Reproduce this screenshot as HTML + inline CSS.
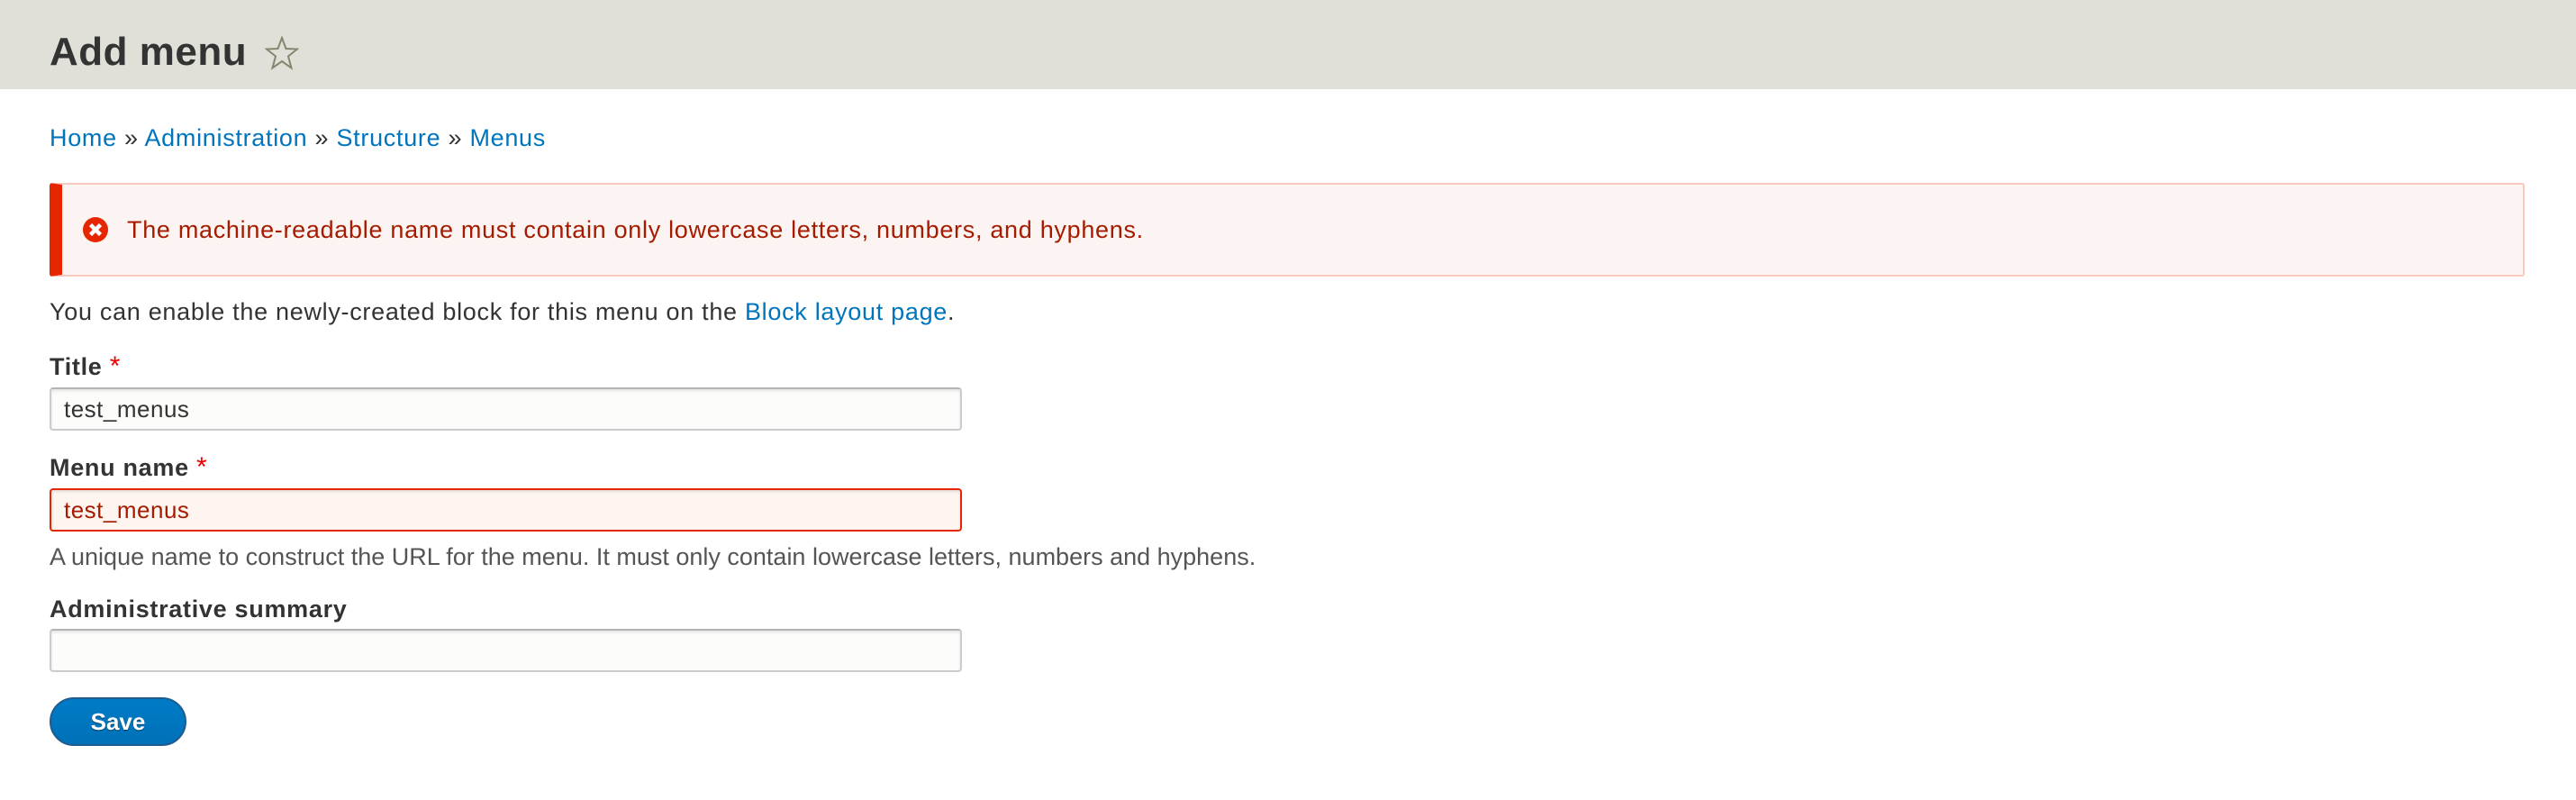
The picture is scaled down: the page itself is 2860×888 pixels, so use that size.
<!DOCTYPE html>
<html><head><meta charset="utf-8"><style>
*{box-sizing:border-box;margin:0;padding:0}
body{width:2860px;height:888px;background:#fff;font-family:"Liberation Sans",sans-serif;color:#333;position:relative;overflow:hidden}
.hdr{position:absolute;left:0;top:0;width:2860px;height:99px;background:#e0e0d8}
h1{position:absolute;left:55px;top:32px;font-size:44px;font-weight:bold;color:#333;line-height:52px;letter-spacing:0.5px}
.star{position:absolute;left:294px;top:40px}
.abs{position:absolute;white-space:nowrap;font-size:27px;line-height:30px;letter-spacing:0.7px}
a{color:#0074bd;text-decoration:none}
.err{position:absolute;left:55px;top:203px;width:2748px;height:104px;background:#fcf4f2;border:2px solid #f9c9bf;border-left:14px solid #e62600;border-radius:3px}
.inp{position:absolute;left:55px;width:1013px;height:48px;background:#fcfcfa;border:2px solid #ccc;border-top-color:#b4b4b4;border-radius:4px;box-shadow:inset 0 2px 3px rgba(0,0,0,.1);font-size:26px;padding-left:14px;line-height:44px;color:#333;letter-spacing:0.5px}
.inp.bad{border-color:#e62600;background:#fef5f1;color:#a51b00}
label{font-weight:bold}
.req{color:#e00;font-size:30px;vertical-align:top}
.btn{position:absolute;left:55px;top:774px;width:152px;height:54px;border-radius:27px;background:linear-gradient(#007bc6,#0071b8);border:2px solid #1e5c90;color:#fff;font-weight:bold;font-size:26px;text-align:center;line-height:50px;text-shadow:0 1px 1px rgba(0,0,0,.5)}
</style></head><body>
<div class="hdr"></div>
<h1>Add menu</h1>
<svg class="star" width="38" height="38" viewBox="0 0 38 38"><path d="M19 2 L23.5 14 L36 14.5 L26 22.5 L29.5 35.5 L19 28 L8.5 35.5 L12 22.5 L2 14.5 L14.5 14 Z" fill="none" stroke="#868670" stroke-width="2"/></svg>
<div class="abs" style="left:55px;top:138px"><a>Home</a> » <a>Administration</a> » <a>Structure</a> » <a>Menus</a></div>
<div class="err"></div>
<svg style="position:absolute;left:91px;top:240px" width="30" height="30" viewBox="0 0 30 30"><circle cx="15" cy="15" r="14" fill="#e62600"/><path d="M9.5 9.5 L20.5 20.5 M20.5 9.5 L9.5 20.5" stroke="#fff" stroke-width="4.5"/></svg>
<div class="abs" style="left:141px;top:240px;color:#a51b00">The machine-readable name must contain only lowercase letters, numbers, and hyphens.</div>
<div class="abs" style="left:55px;top:331px">You can enable the newly-created block for this menu on the <a>Block layout page</a>.</div>
<div class="abs" style="left:55px;top:392px"><label>Title</label> <span class="req">*</span></div>
<div class="inp" style="top:430px">test_menus</div>
<div class="abs" style="left:55px;top:504px"><label>Menu name</label> <span class="req">*</span></div>
<div class="inp bad" style="top:542px">test_menus</div>
<div class="abs" style="left:55px;top:603px;color:#555;letter-spacing:0">A unique name to construct the URL for the menu. It must only contain lowercase letters, numbers and hyphens.</div>
<div class="abs" style="left:55px;top:661px"><label>Administrative summary</label></div>
<div class="inp" style="top:698px"></div>
<div class="btn">Save</div>
</body></html>
